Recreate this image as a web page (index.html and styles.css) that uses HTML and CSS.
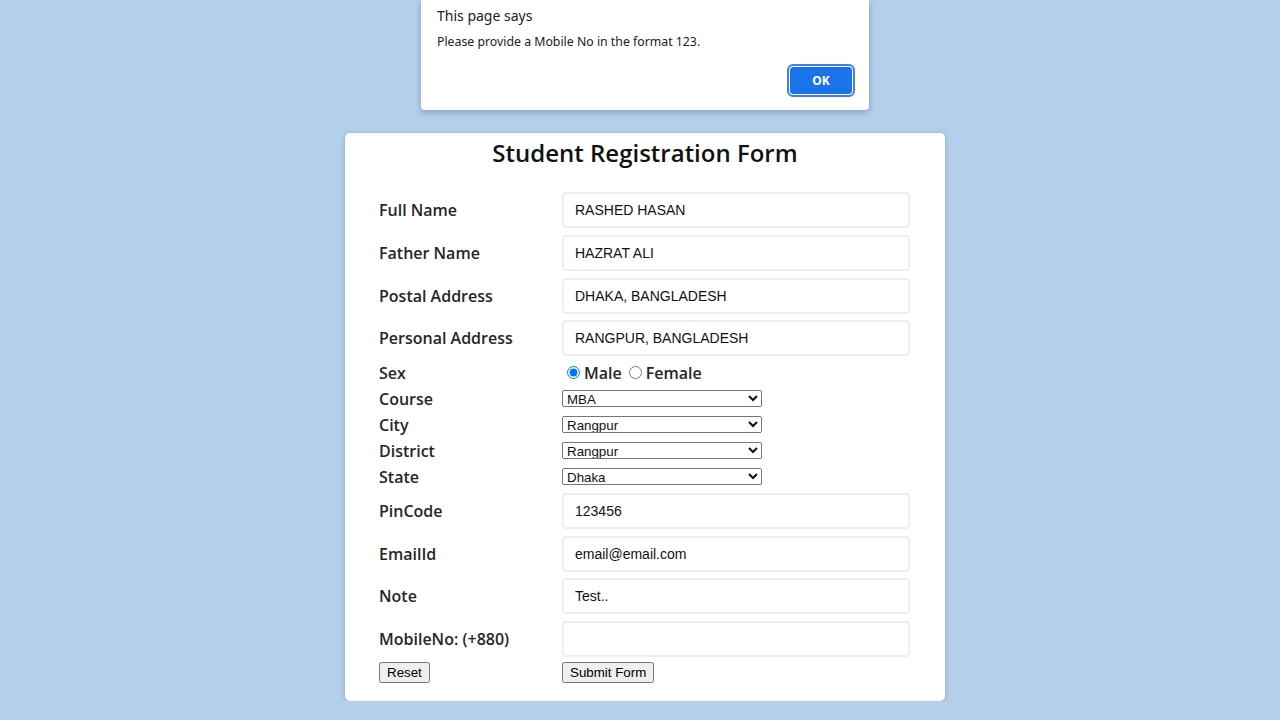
FILE: index.html
```html
<!DOCTYPE html>
<html lang="en">
<head>
  <meta charset="UTF-8">
  <meta name="viewport" content="width=device-width, initial-scale=1.0">
  <title>Student Registration Form</title>
  <link rel="stylesheet" href="styles.css">
</head>
<body>
  <div class="alert-box">
    <div class="alert-title">This page says</div>
    <div class="alert-msg">Please provide a Mobile No in the format 123.</div>
    <div class="alert-actions">
      <button type="button" class="alert-ok">OK</button>
    </div>
  </div>

  <div class="card">
    <h2>Student Registration Form</h2>
    <form class="reg-form" name="StudentRegistration">
      <label class="lbl" for="fullname">Full Name</label>
      <div class="txt-cell"><input type="text" id="fullname" value="RASHED HASAN"></div>

      <label class="lbl" for="father">Father Name</label>
      <div class="txt-cell"><input type="text" id="father" value="HAZRAT ALI"></div>

      <label class="lbl" for="postal">Postal Address</label>
      <div class="txt-cell"><input type="text" id="postal" value="DHAKA, BANGLADESH"></div>

      <label class="lbl" for="personal">Personal Address</label>
      <div class="txt-cell"><input type="text" id="personal" value="RANGPUR, BANGLADESH"></div>

      <span class="lbl small">Sex</span>
      <div class="sel-cell radios">
        <input type="radio" name="sex" id="male" checked><label for="male">Male</label>
        <input type="radio" name="sex" id="female"><label for="female">Female</label>
      </div>

      <label class="lbl small" for="course">Course</label>
      <div class="sel-cell">
        <select id="course"><option>MBA</option><option>BBA</option><option>BSC</option></select>
      </div>

      <label class="lbl small" for="city">City</label>
      <div class="sel-cell">
        <select id="city"><option>Rangpur</option><option>Dhaka</option></select>
      </div>

      <label class="lbl small" for="district">District</label>
      <div class="sel-cell">
        <select id="district"><option>Rangpur</option><option>Dhaka</option></select>
      </div>

      <label class="lbl small" for="state">State</label>
      <div class="sel-cell">
        <select id="state"><option>Dhaka</option><option>Rangpur</option></select>
      </div>

      <label class="lbl" for="pincode">PinCode</label>
      <div class="txt-cell"><input type="text" id="pincode" value="123456"></div>

      <label class="lbl" for="email">EmailId</label>
      <div class="txt-cell"><input type="text" id="email" value="email@email.com"></div>

      <label class="lbl" for="note">Note</label>
      <div class="txt-cell"><input type="text" id="note" value="Test.."></div>

      <label class="lbl" for="mobile">MobileNo: (+880)</label>
      <div class="txt-cell"><input type="text" id="mobile" value=""></div>

      <div class="btn-cell"><button type="reset">Reset</button></div>
      <div class="btn-cell"><button type="button">Submit Form</button></div>
    </form>
  </div>
</body>
</html>
```

FILE: styles.css
```css
/* page */
body {
  margin: 0;
  padding: 133px 0 0 10px;
  background: #b3cfeb;
  font-family: "Open Sans", Arial, sans-serif;
}

/* browser alert */
.alert-box {
  position: absolute;
  top: 0;
  left: 421px;
  width: 448px;
  height: 110px;
  box-sizing: border-box;
  background: #fff;
  border-radius: 0 0 4px 4px;
  box-shadow: 0 2px 6px rgba(40, 60, 90, 0.35);
  padding: 6px 16px 0 16px;
  font-family: "Noto Sans", "Open Sans", sans-serif;
  color: #202124;
}
.alert-title {
  font-size: 14px;
  line-height: 20px;
}
.alert-msg {
  font-size: 12.3px;
  line-height: 18px;
  margin-top: 7px;
}
.alert-actions {
  display: flex;
  justify-content: flex-end;
  margin-top: 15px;
}
.alert-ok {
  width: 64px;
  height: 29px;
  background: #1a73e8;
  color: #fff;
  border: 1px solid #fff;
  outline: 2px solid #3b82ee;
  border-radius: 4px;
  font-family: "Noto Sans", "Open Sans", sans-serif;
  font-size: 12px;
  font-weight: 700;
}

/* form card */
.card {
  width: 600px;
  margin: 0 auto;
  box-sizing: border-box;
  background: #fff;
  border-radius: 5px;
  box-shadow: 0 1px 4px rgba(60, 80, 110, 0.35);
  padding: 4px 34px 16px 34px;
}
.card h2 {
  margin: 0 0 20px 0;
  text-align: center;
  font-size: 24px;
  line-height: 32px;
  font-weight: 600;
  color: #111;
}

.reg-form {
  display: grid;
  grid-template-columns: 183px 348px;
}
.lbl {
  display: flex;
  align-items: center;
  font-size: 16px;
  font-weight: 600;
  color: #262626;
  height: 42.67px;
}
.lbl.small {
  height: 26px;
}
.txt-cell {
  height: 42.67px;
  display: flex;
  align-items: center;
}
.txt-cell input {
  width: 100%;
  height: 36px;
  box-sizing: border-box;
  border: 2px solid #eeeeee;
  border-radius: 4px;
  padding: 0 11px;
  font-family: "Liberation Sans", Arial, sans-serif;
  font-size: 14px;
  color: #111;
}
.sel-cell {
  height: 26px;
  display: flex;
  align-items: center;
}
.sel-cell select {
  width: 200px;
  height: 17px;
  padding: 0;
  font-family: "Liberation Sans", Arial, sans-serif;
  font-size: 13.33px;
  color: #111;
}
.radios {
  font-size: 16px;
  font-weight: 600;
  color: #262626;
}
.radios input {
  margin: 0 4px 0 5px;
}
.radios label {
  margin-right: 2px;
}
.btn-cell {
  height: 25px;
  display: flex;
  align-items: center;
}
.btn-cell button {
  font-family: "Liberation Sans", Arial, sans-serif;
  font-size: 13.33px;
  padding: 1px 6px;
}
```
